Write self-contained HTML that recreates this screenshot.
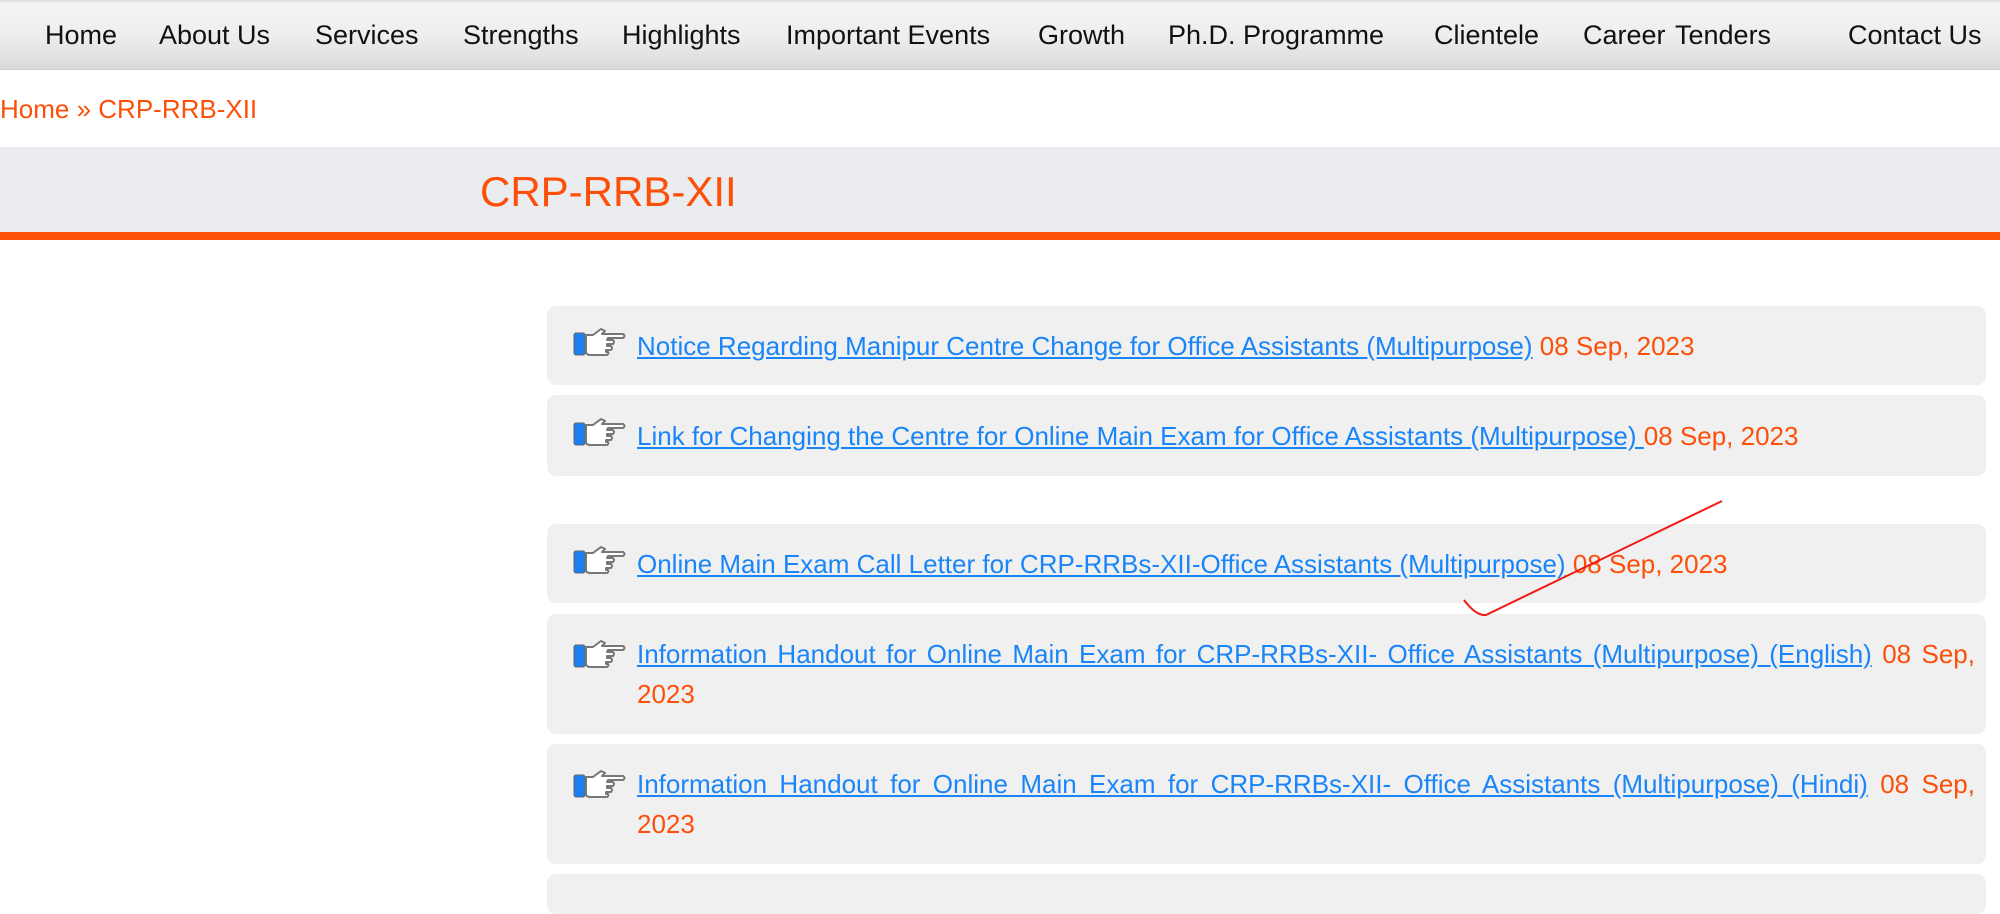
<!DOCTYPE html>
<html><head><meta charset="utf-8"><style>
body{margin:0;width:2000px;height:876px;overflow:hidden;background:#fff;font-family:"Liberation Sans",Arial,sans-serif;position:relative}
.nav{position:absolute;left:0;top:0;width:2000px;height:70px;background:linear-gradient(#f4f4f4,#eeeeee 50%,#dadada);border-top:2px solid #e2e2e2;box-sizing:border-box;border-bottom:1px solid #cfcfcf}
.nav span{position:absolute;top:18px;font-size:27px;color:#111;white-space:nowrap}
.bc{position:absolute;left:0;top:94px;font-size:26px;color:#fc500a}
.band{position:absolute;left:0;top:147px;width:2000px;height:85px;background:#ebecef}
.band div{position:absolute;left:480px;top:21px;font-size:42px;color:#fc500a}
.bar{position:absolute;left:0;top:232px;width:2000px;height:8px;background:#fc500a}
.card{position:absolute;left:547px;width:1439px;background:#f0f0f0;border-radius:9px;box-sizing:border-box;padding:0 10px 0 90px}
.txt{font-size:26px;line-height:40px;white-space:nowrap}
.txt a{color:#1a85f8;text-decoration:underline}
.txt b{color:#fc500a;font-weight:normal}
.j{text-align:justify;text-align-last:justify;white-space:normal;width:1338px}
.ic{position:absolute;left:26px}
</style></head><body>
<div class="nav">
<span style="left:45px">Home</span><span style="left:159px">About Us</span><span style="left:315px">Services</span><span style="left:463px">Strengths</span><span style="left:622px">Highlights</span><span style="left:786px">Important Events</span><span style="left:1038px">Growth</span><span style="left:1168px">Ph.D. Programme</span><span style="left:1434px">Clientele</span><span style="left:1583px">Career</span><span style="left:1675px">Tenders</span><span style="left:1848px">Contact Us</span>
</div>
<div class="bc">Home » CRP-RRB-XII</div>
<div class="band"><div>CRP-RRB-XII</div></div>
<div class="bar"></div>

<svg width="0" height="0" style="position:absolute"><defs><symbol id="h" viewBox="0 0 54 30"><rect x="1" y="6" width="11" height="22" rx="2" fill="#1c7ff0" stroke="#666" stroke-width="1"/><path d="M13 8 L20 8 L28 2 L32 4 L29 7 L50 7 Q53 9 50 11 L35 11 L34 13 L40 13 Q42 15 40 17 L34 17 L34 19 L38 19 Q40 21 38 23 L33 23 L33 25 L35 25 Q36 27 34 28 L16 28 Q13 27 13 25 Z" fill="#fff" stroke="#777" stroke-width="2" stroke-linejoin="round"/></symbol></defs></svg>

<div class="card" style="top:306px;height:79px"><svg class="ic" style="top:21px" width="54" height="30"><use href="#h"/></svg><div class="txt" style="padding-top:20px"><a>Notice Regarding Manipur Centre Change for Office Assistants (Multipurpose)</a> <b>08 Sep, 2023</b></div></div>
<div class="card" style="top:395px;height:81px"><svg class="ic" style="top:22px" width="54" height="30"><use href="#h"/></svg><div class="txt" style="padding-top:21px"><a>Link for Changing the Centre for Online Main Exam for Office Assistants (Multipurpose) </a> <b>08 Sep, 2023</b></div></div>
<div class="card" style="top:524px;height:79px"><svg class="ic" style="top:21px" width="54" height="30"><use href="#h"/></svg><div class="txt" style="padding-top:20px"><a>Online Main Exam Call Letter for CRP-RRBs-XII-Office Assistants (Multipurpose)</a> <b>08 Sep, 2023</b></div></div>
<div class="card" style="top:614px;height:120px"><svg class="ic" style="top:25px" width="54" height="30"><use href="#h"/></svg><div class="txt" style="padding-top:20px"><div class="j"><a>Information Handout for Online Main Exam for CRP-RRBs-XII- Office Assistants (Multipurpose) (English)</a> <b>08 Sep,</b></div><b>2023</b></div></div>
<div class="card" style="top:744px;height:120px"><svg class="ic" style="top:25px" width="54" height="30"><use href="#h"/></svg><div class="txt" style="padding-top:20px"><div class="j"><a>Information Handout for Online Main Exam for CRP-RRBs-XII- Office Assistants (Multipurpose) (Hindi)</a> <b>08 Sep,</b></div><b>2023</b></div></div>
<div class="card" style="top:874px;height:40px"></div>

<svg style="position:absolute;left:0;top:0" width="2000" height="876"><path d="M1464 600 Q1476 616 1486 615 L1722 501" fill="none" stroke="#f01a14" stroke-width="2"/></svg>
</body></html>
